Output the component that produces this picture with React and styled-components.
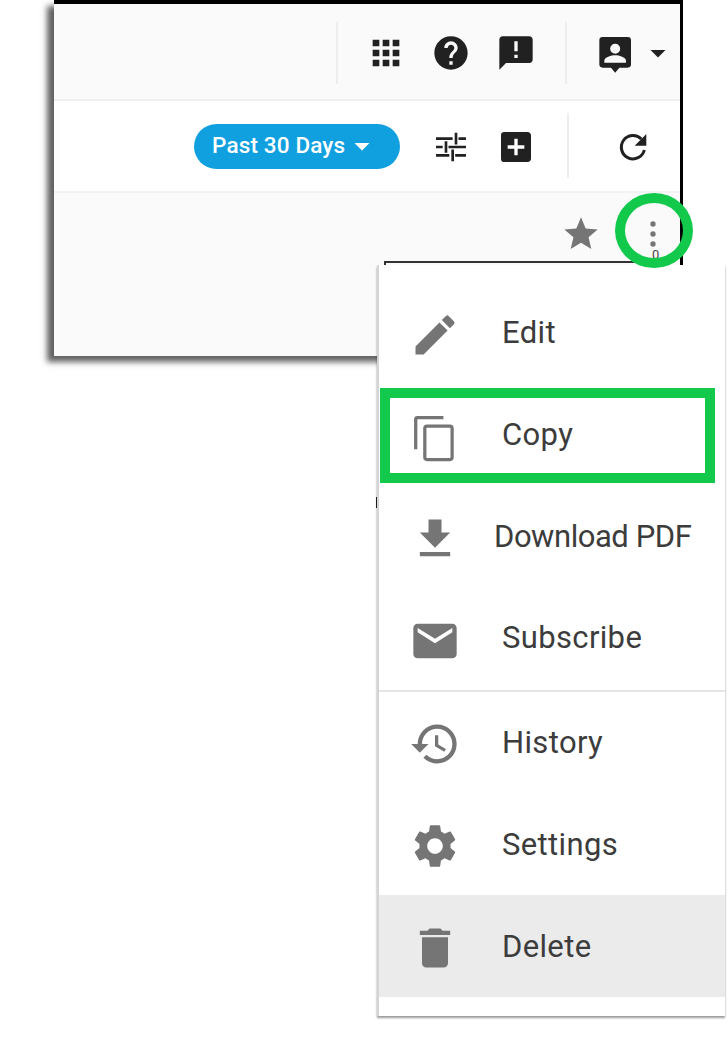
import React from "react";
import styled, { createGlobalStyle } from "styled-components";
import {
  MdApps, MdHelp, MdAnnouncement, MdArrowDropDown, MdAddBox,
  MdStar, MdEdit, MdFileDownload, MdEmail, MdHistory, MdSettings, MdDelete,
} from "react-icons/md";

const Global = createGlobalStyle`
  html, body { margin: 0; padding: 0; background: #fff; }
  body { font-family: Roboto, "Liberation Sans", sans-serif; }
`;

const Page = styled.div`
  position: relative;
  width: 728px;
  height: 1045px;
  overflow: hidden;
  background: #fff;
`;

const Panel = styled.section`
  box-sizing: border-box;
  margin-left: 54px;
  width: 629px;
  height: 356px;
  border-top: 4px solid #000;
  border-right: 3px solid #000;
  background: #fafafa;
  box-shadow: -7px 6px 6px rgba(0, 0, 0, 0.62);
  display: flex;
  flex-direction: column;
`;

const TopBar = styled.div`
  box-sizing: border-box;
  height: 97px;
  padding: 18px 0 15px;
  background: #fafafa;
  border-bottom: 2px solid #f0f0f0;
  display: flex;
  align-items: center;
  justify-content: flex-end;
`;

const FilterBar = styled.div`
  box-sizing: border-box;
  height: 92px;
  padding: 14px 27px 13px 0;
  background: #fff;
  border-bottom: 2px solid #f2f2f2;
  display: flex;
  align-items: center;
  justify-content: flex-end;
`;

const CardBar = styled.div`
  padding: 21px 7px 0 0;
  display: flex;
  justify-content: flex-end;
  gap: 32px;
  color: #757575;
`;

const Tool = styled.span`
  display: flex;
  flex: none;
  width: ${(p) => p.$size || 40}px;
  height: ${(p) => p.$size || 40}px;
  margin-left: ${(p) => p.$gap || 0}px;
  color: ${(p) => p.$color || "#212121"};
  svg { width: 100%; height: 100%; display: block; }
`;

const VRule = styled.i`
  display: block;
  flex: none;
  width: 2px;
  align-self: stretch;
  background: #ededed;
  margin-top: ${(p) => p.$top || 0}px;
  margin-left: ${(p) => p.$left}px;
  margin-right: ${(p) => p.$right}px;
`;

const Pill = styled.button`
  box-sizing: border-box;
  width: 206px;
  height: 45px;
  padding: 0 0 2px 18px;
  margin-right: 31px;
  border: 0;
  border-radius: 23px;
  background: #10a0e0;
  color: #fff;
  font: 500 22.5px/1 Roboto, sans-serif;
  letter-spacing: 0.15px;
  display: flex;
  align-items: center;
  white-space: nowrap;
`;

const PillCaret = styled(MdArrowDropDown)`
  width: 36px;
  height: 36px;
  margin-left: -1px;
  flex: none;
`;

const StrayFrame = styled.div`
  position: absolute;
  left: 384px;
  top: 261px;
  width: 288px;
  height: 20px;
  border-top: 2px solid #333;
  border-left: 2px solid #333;
`;

const StrayMark = styled.span`
  position: absolute;
  left: 652px;
  top: 247px;
  font: 400 13px/16px Roboto, sans-serif;
  color: #444;
`;

const StrayTick = styled.i`
  position: absolute;
  left: 376px;
  top: 497px;
  width: 2px;
  height: 11px;
  background: #222;
`;

const Menu = styled.nav`
  position: absolute;
  left: 377px;
  top: 265px;
  box-sizing: border-box;
  width: 348px;
  padding: 17px 0 19px;
  background: #fff;
  border-left: 2px solid #d4d4d4;
  box-shadow: 0 2px 2px rgba(0, 0, 0, 0.4);
`;

const Item = styled.div`
  box-sizing: border-box;
  height: 102px;
  padding: 3px 0 0 30px;
  display: flex;
  align-items: center;
  background: ${(p) => (p.$active ? "#ebebeb" : "transparent")};
  color: #757575;
`;

const ItemIcon = styled.span`
  display: flex;
  width: 52px;
  height: 52px;
  flex: none;
  svg { width: 100%; height: 100%; display: block; }
`;

const Label = styled.span`
  margin-left: ${(p) => p.$gap || 41}px;
  font: 400 31px/1 Roboto, sans-serif;
  letter-spacing: ${(p) => p.$track ?? 0.35}px;
  color: #3c3c3c;
  white-space: nowrap;
  position: relative;
  top: ${(p) => p.$lift ?? -1}px;
`;

const Divider = styled.hr`
  margin: 0 0 -1px;
  border: 0;
  height: 2px;
  background: #e6e6e6;
`;

const Ring = styled.div`
  position: absolute;
  left: 615px;
  top: 193px;
  box-sizing: border-box;
  width: 78px;
  height: 75px;
  border: 10px solid #12c94c;
  border-radius: 50%;
`;

const Callout = styled.div`
  position: absolute;
  left: 380px;
  top: 388px;
  box-sizing: border-box;
  width: 335px;
  height: 95px;
  border: 10px solid #12c94c;
`;

const CopyIcon = () => (
  <svg viewBox="0 0 24 24" fill="none" stroke="currentColor" strokeWidth="1.5">
    <path d="M15.9 3.1H3.9c-.5 0-.8.3-.8.8V17.6" />
    <rect x="7.3" y="7" width="12.6" height="15.4" rx="1" />
  </svg>
);

const PersonBadge = () => (
  <svg viewBox="0 0 24 24" fill="currentColor" fillRule="evenodd">
    <path d="M4 2.4h15a2 2 0 0 1 2 2v14.4a2 2 0 0 1-2 2h-5l-2.5 3-2.5-3H4a2 2 0 0 1-2-2V4.4a2 2 0 0 1 2-2zM11.5 6.5a3 3 0 1 0 0 6 3 3 0 0 0 0-6zM5 17.9v-1.4c0-2 4.2-3.2 6.5-3.2s6.5 1.2 6.5 3.2v1.4z" />
  </svg>
);

const Sliders = () => (
  <svg viewBox="0 0 24 24" fill="none" stroke="currentColor" strokeWidth="1.6">
    <path d="M3 7h10M16.5 7H21M15 3.5V10.500M3 12h4M10.500 12H21M9 8.500v7M3 17h8M14.500 17H21M13 13.500V20.500" />
  </svg>
);

const Reload = () => (
  <svg viewBox="0 0 24 24">
    <path d="M17 7.200A7 7 0 1 0 18.800 13.800" fill="none" stroke="currentColor" strokeWidth="1.800" />
    <path d="M20 4.200v7h-7z" fill="currentColor" />
  </svg>
);

const KebabDots = () => (
  <svg viewBox="0 0 24 24" fill="currentColor">
    <circle cx="12" cy="6" r="1.600" />
    <circle cx="12" cy="12" r="1.600" />
    <circle cx="12" cy="18" r="1.600" />
  </svg>
);

const items = [
  { label: "Edit", Icon: MdEdit, lift: -2 },
  { label: "Copy", Icon: CopyIcon, lift: -2 },
  { label: "Download PDF", Icon: MdFileDownload, gap: 33, track: -0.45, lift: -2 },
  { label: "Subscribe", Icon: MdEmail, lift: -3 },
];
const lower = [
  { label: "History", Icon: MdHistory },
  { label: "Settings", Icon: MdSettings },
  { label: "Delete", Icon: MdDelete, active: true },
];

const Row = ({ label, Icon, gap, track, lift, active }) => (
  <Item $active={active}>
    <ItemIcon><Icon /></ItemIcon>
    <Label $gap={gap} $track={track} $lift={lift}>{label}</Label>
  </Item>
);

export default function App() {
  return (
    <Page>
      <Global />
      <Panel>
        <TopBar>
          <VRule $left={0} $right={28} />
          <Tool><MdApps /></Tool>
          <Tool $gap={25}><MdHelp /></Tool>
          <Tool $gap={25}><MdAnnouncement /></Tool>
          <VRule $left={29} $right={29} />
          <Tool><PersonBadge /></Tool>
          <Tool $size={36} $gap={4}><MdArrowDropDown /></Tool>
          <Tool $size={4} />
        </TopBar>
        <FilterBar>
          <Pill>Past 30 Days<PillCaret /></Pill>
          <Tool $size={40}><Sliders /></Tool>
          <Tool $gap={25}><MdAddBox /></Tool>
          <VRule $top={-2} $left={31} $right={44} />
          <Tool><Reload /></Tool>
        </FilterBar>
        <CardBar>
          <Tool $color="#757575"><MdStar /></Tool>
          <Tool $color="#757575"><KebabDots /></Tool>
        </CardBar>
      </Panel>
      <StrayFrame />
      <StrayMark>0</StrayMark>
      <StrayTick />
      <Menu>
        {items.map((it) => <Row key={it.label} {...it} />)}
        <Divider />
        {lower.map((it) => <Row key={it.label} {...it} />)}
      </Menu>
      <Ring />
      <Callout />
    </Page>
  );
}
